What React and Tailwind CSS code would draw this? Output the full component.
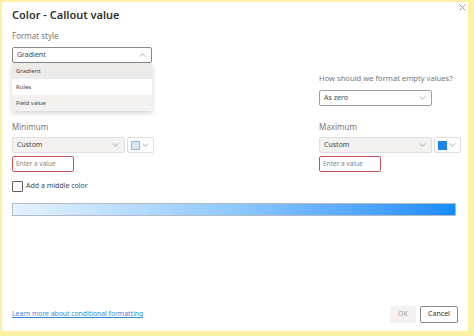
import React from 'react'

const Chevron = ({ up = false, className = '' }) => (
  <svg className={`shrink-0 ${className}`} width="7" height="4" viewBox="0 0 8 5" fill="none">
    <polyline
      points={up ? '0.5,4.5 4,1 7.5,4.5' : '0.5,0.5 4,4 7.5,0.5'}
      stroke="#8a8886"
      strokeWidth="0.9"
    />
  </svg>
)

const ValueColumn = ({ label, swatch, swatchBorder }) => (
  <div className="flex flex-col">
    <div className="whitespace-nowrap text-[8px] leading-[12px] text-[#797775]">{label}</div>
    <div className="mt-[4px] flex gap-[2px]">
      <div className="flex h-[16px] w-[113px] items-center justify-between rounded-[2px] border border-[#e1dfdd] bg-[#f3f2f1] pl-[4px] pr-[5px]">
        <span className="text-[7px] text-[#484644]">Custom</span>
        <Chevron />
      </div>
      <div className="flex h-[16px] w-[27px] items-center justify-between rounded-[2px] border border-[#e1dfdd] bg-white pl-[3px] pr-[4px]">
        <span className={`block h-[9px] w-[9px] shrink-0 border ${swatchBorder}`} style={{ background: swatch }} />
        <Chevron />
      </div>
    </div>
    <div className="mt-[3px] flex h-[16px] w-[62px] items-center rounded-[2px] border border-[#c8505a] pl-[3px]">
      <span className="whitespace-nowrap text-[6.5px] text-[#8a8886]">Enter a value</span>
    </div>
  </div>
)

export default function App() {
  return (
    <div
      className="h-[336px] w-[474px] bg-[#fdf1a3] pb-[5px] pl-[2px] pr-[6px] pt-[2px]"
      style={{ fontFamily: '"Noto Sans", "Open Sans", sans-serif' }}
    >
      <div className="relative flex h-full flex-col bg-white px-[10px] pb-[8px]">
        {/* close */}
        <svg className="absolute right-[2px] top-[2px]" width="7" height="7" viewBox="0 0 7 7">
          <path d="M0.5 0.5L6.5 6.5M6.5 0.5L0.5 6.5" stroke="#8a8886" strokeWidth="0.8" />
        </svg>

        <div className="mt-[6px] text-[11px] font-semibold leading-[14px] text-[#323130]">
          Color - Callout value
        </div>

        <div className="mt-[8px] text-[8px] leading-[12px] text-[#797775]">Format style</div>

        <div className="relative mt-[5px] w-[140px]">
          <div className="flex h-[16px] items-center justify-between rounded-[2px] border border-[#8a8886] bg-white pl-[4px] pr-[5px]">
            <span className="text-[7px] text-[#484644]">Gradient</span>
            <Chevron up />
          </div>
          {/* open dropdown */}
          <div className="absolute left-0 top-[16px] z-10 w-[140px] bg-white shadow-[0_2px_5px_rgba(0,0,0,0.18)]">
            <div className="flex h-[16px] items-center bg-[#edebe9] pl-[4px] text-[6px] text-[#484644]">Gradient</div>
            <div className="flex h-[16px] items-center pl-[4px] text-[6px] text-[#484644]">Rules</div>
            <div className="flex h-[16px] items-center bg-[#f3f2f1] pl-[4px] text-[6px] text-[#484644]">Field value</div>
          </div>
        </div>

        <div className="mt-[9px] flex">
          <div className="w-[307px] shrink-0" />
          <div className="flex flex-col">
            <div className="whitespace-nowrap text-[7.6px] leading-[12px] text-[#797775]">How should we format empty values?</div>
            <div className="mt-[6px] flex h-[16px] w-[113px] items-center justify-between rounded-[2px] border border-[#a19f9d] bg-white pl-[4px] pr-[5px]">
              <span className="text-[7px] text-[#484644]">As zero</span>
              <Chevron />
            </div>
          </div>
        </div>

        <div className="mt-[15px] flex">
          <div className="w-[307px] shrink-0">
            <ValueColumn label="Minimum" swatch="#d6e7f8" swatchBorder="border-[#9fb6cc]" />
          </div>
          <ValueColumn label="Maximum" swatch="#1a86e8" swatchBorder="border-[#1a86e8]" />
        </div>

        <div className="mt-[9px] flex items-center gap-[3px]">
          <span className="block h-[11px] w-[11px] rounded-[1px] border border-[#605e5c] bg-white" />
          <span className="text-[7px] text-[#484644]">Add a middle color</span>
        </div>

        <div className="mt-[11px] h-[13px] w-[444px] border border-[#b3bcc6] bg-gradient-to-r from-[#e6f2fe] via-[#8ec8fd] to-[#128bff]" />

        <div className="mt-auto flex items-center justify-between">
          <span className="text-[6.8px] text-[#3a86d0] underline">Learn more about conditional formatting</span>
          <div className="flex gap-[4px]">
            <div className="flex h-[17px] w-[26px] items-center justify-center rounded-[2px] bg-[#f3f2f1] text-[7px] text-[#a19f9d]">
              OK
            </div>
            <div className="flex h-[17px] w-[38px] items-center justify-center rounded-[2px] border border-[#8a8886] bg-white text-[7px] text-[#323130]">
              Cancel
            </div>
          </div>
        </div>
      </div>
    </div>
  )
}
